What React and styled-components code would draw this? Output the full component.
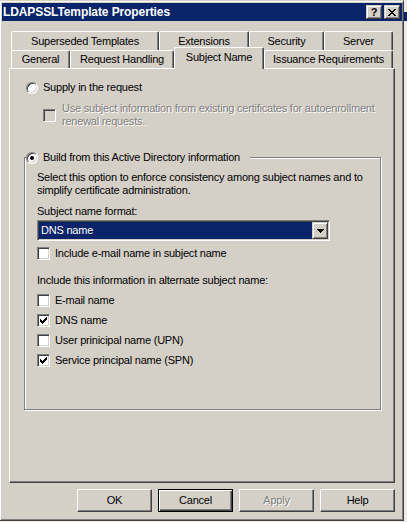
import React from 'react';
import styled, { createGlobalStyle, css } from 'styled-components';

const Global = createGlobalStyle`
  html, body { margin: 0; padding: 0; }
  body {
    background: linear-gradient(#0a246a, #0a246a) no-repeat 404px 12px / 3px 9px, #ecebe6;
    font-family: "Liberation Sans", Arial, sans-serif;
    font-size: 11px;
  }
`;

const Window = styled.div`
  box-sizing: border-box;
  width: 405px;
  height: 521px;
  margin-left: -1px;
  background: #d4d0c8;
  border: 1px solid;
  border-color: #d4d0c8 #404040 #404040 #d4d0c8;
  box-shadow: inset 1px 1px #fff, inset -1px -1px #808080;
  padding: 2px 1px 0 2px;
  display: flex;
  flex-direction: column;
  font-family: "Liberation Sans", Arial, sans-serif;
  font-size: 11px;
  line-height: 13px;
  letter-spacing: -0.22px;
  color: #000;
`;

const TitleBar = styled.div`
  height: 18px;
  background: #0a246a;
  display: flex;
  align-items: center;
  padding-left: 1px;
`;

const TitleText = styled.div`
  color: #fff;
  font-weight: bold;
  font-size: 12px;
  letter-spacing: -0.1px;
  white-space: nowrap;
`;

const CaptionButtons = styled.div`
  margin-left: auto;
  margin-right: 2px;
  display: flex;
  gap: 2px;
`;

const CaptionButton = styled.div`
  box-sizing: border-box;
  width: 16px;
  height: 14px;
  background: #d4d0c8;
  border: 1px solid;
  border-color: #d4d0c8 #404040 #404040 #d4d0c8;
  box-shadow: inset 1px 1px #fff, inset -1px -1px #808080;
  display: flex;
  align-items: center;
  justify-content: center;
  font-weight: bold;
  font-size: 11px;
  letter-spacing: 0;
  color: #000;
`;

const Body = styled.div`
  padding: 10px 7px 0 7px;
  display: flex;
  flex-direction: column;
`;

const TabStrip = styled.div`
  margin-left: 2px;
  width: 382px;
  display: flex;
  flex-direction: column;
`;

const TabRow = styled.div`
  display: flex;
  align-items: flex-start;
  height: ${(p) => p.$h}px;
`;

const Tab = styled.div`
  box-sizing: border-box;
  flex: none;
  width: ${(p) => p.$w}px;
  height: ${(p) => p.$h}px;
  background: #d4d0c8;
  border-top: 1px solid #fff;
  border-left: 1px solid #fff;
  border-right: 1px solid #404040;
  border-radius: 2px 2px 0 0;
  box-shadow: inset -1px 0 #808080;
  display: flex;
  justify-content: center;
  padding-top: ${(p) => p.$pt}px;
  white-space: nowrap;
  ${(p) =>
    p.$selected &&
    css`
      position: relative;
      z-index: 2;
      margin-top: -3px;
      height: 22px;
    `}
`;

const Panel = styled.div`
  box-sizing: border-box;
  height: 415px;
  border: 1px solid;
  border-color: #fff #404040 #404040 #fff;
  box-shadow: inset -1px -1px #808080;
  padding: 12px 0 0 16px;
  display: flex;
  flex-direction: column;
`;

const OptionRow = styled.div`
  display: flex;
  align-items: center;
  gap: ${(p) => p.$gap ?? 5}px;
  margin-top: ${(p) => p.$mt ?? 0}px;
  margin-left: ${(p) => p.$ml ?? 0}px;
  white-space: nowrap;
`;

const Radio = styled.div`
  box-sizing: border-box;
  flex: none;
  width: 12px;
  height: 12px;
  border-radius: 50%;
  background: #fff;
  border: 1px solid;
  border-color: #808080 #fff #fff #808080;
  box-shadow: inset 1px 1px #404040, inset -1px -1px #d4d0c8;
  display: flex;
  align-items: center;
  justify-content: center;
  &::after {
    content: '';
    display: ${(p) => (p.$checked ? 'block' : 'none')};
    width: 4px;
    height: 4px;
    border-radius: 50%;
    background: #000;
  }
`;

const Box = styled.div`
  box-sizing: border-box;
  flex: none;
  width: 13px;
  height: 13px;
  background: ${(p) => (p.$disabled ? '#d4d0c8' : '#fff')};
  border: 1px solid;
  border-color: #808080 #fff #fff #808080;
  box-shadow: inset 1px 1px #404040, inset -1px -1px #d4d0c8;
  display: flex;
  align-items: center;
  justify-content: center;
`;

const Label = styled.span`
  color: ${(p) => (p.$disabled ? '#808080' : '#000')};
  ${(p) => p.$disabled && css`text-shadow: 1px 1px #fff;`}
`;

const Group = styled.div`
  position: relative;
  box-sizing: border-box;
  width: 357px;
  height: 253px;
  margin: 29px 0 0 -2px;
  border: 1px solid #808080;
  box-shadow: inset 1px 1px #fff, 1px 1px #fff;
  padding: 13px 0 0 12px;
  display: flex;
  flex-direction: column;
  align-items: flex-start;
`;

const GroupLegend = styled.div`
  position: absolute;
  top: -7px;
  left: 1px;
  background: #d4d0c8;
  padding-right: 10px;
  display: flex;
  align-items: center;
  gap: 5px;
  white-space: nowrap;
`;

const Text = styled.div`
  margin-top: ${(p) => p.$mt ?? 0}px;
  white-space: nowrap;
`;

const Combo = styled.div`
  box-sizing: border-box;
  margin-top: 2px;
  width: 293px;
  height: 21px;
  background: #fff;
  border: 1px solid;
  border-color: #808080 #fff #fff #808080;
  box-shadow: inset 1px 1px #404040, inset -1px -1px #d4d0c8;
  padding: 1px;
  display: flex;
`;

const ComboValue = styled.div`
  flex: 1;
  background: #0a246a;
  color: #fff;
  padding-left: 2px;
  display: flex;
  align-items: center;
`;

const DropButton = styled.div`
  box-sizing: border-box;
  width: 16px;
  height: 17px;
  background: #d4d0c8;
  border: 1px solid;
  border-color: #d4d0c8 #404040 #404040 #d4d0c8;
  box-shadow: inset 1px 1px #fff, inset -1px -1px #808080;
  display: flex;
  align-items: center;
  justify-content: center;
`;

const ButtonRow = styled.div`
  margin-top: 6px;
  display: flex;
  justify-content: flex-end;
  gap: 6px;
`;

const Button = styled.div`
  box-sizing: border-box;
  width: 75px;
  height: 23px;
  background: #d4d0c8;
  border: 1px solid;
  border-color: #fff #404040 #404040 #fff;
  box-shadow: inset -1px -1px #808080;
  display: flex;
  align-items: center;
  justify-content: center;
  color: ${(p) => (p.$disabled ? '#808080' : '#000')};
  ${(p) => p.$disabled && css`text-shadow: 1px 1px #fff;`}
  ${(p) =>
    p.$default &&
    css`
      border-color: #000;
      box-shadow: inset 1px 1px #fff, inset -1px -1px #404040, inset -2px -2px #808080;
    `}
`;

const Check = () => (
  <svg width="7" height="7" viewBox="0 0 7 7" shapeRendering="crispEdges">
    <path
      fill="#000"
      d="M6 0h1v1h-1zM5 1h2v1h-2zM0 2h1v1h-1zM4 2h3v1h-3zM0 3h2v1h-2zM3 3h3v1h-3zM0 4h5v1h-5zM1 5h3v1h-3zM2 6h1v1h-1z"
    />
  </svg>
);

const Arrow = () => (
  <svg width="7" height="4" viewBox="0 0 7 4" shapeRendering="crispEdges">
    <path fill="#000" d="M0 0h7v1h-7zM1 1h5v1h-5zM2 2h3v1h-3zM3 3h1v1h-1z" />
  </svg>
);

const CloseGlyph = () => (
  <svg width="8" height="7" viewBox="0 0 8 7" shapeRendering="crispEdges">
    <path
      fill="#000"
      d="M0 0h2v1h-2zM6 0h2v1h-2zM1 1h2v1h-2zM5 1h2v1h-2zM2 2h4v1h-4zM3 3h2v1h-2zM2 4h4v1h-4zM1 5h2v1h-2zM5 5h2v1h-2zM0 6h2v1h-2zM6 6h2v1h-2z"
    />
  </svg>
);

const CheckBox = ({ checked, disabled }) => (
  <Box $disabled={disabled}>{checked && <Check />}</Box>
);

const row1 = [
  ['Superseded Templates', 148],
  ['Extensions', 90],
  ['Security', 75],
  ['Server', 69],
];
const row2 = [
  ['General', 59],
  ['Request Handling', 104],
  ['Subject Name', 90, true],
  ['Issuance Requirements', 129],
];

const altNames = [
  ['E-mail name', false],
  ['DNS name', true],
  ['User prinicipal name (UPN)', false],
  ['Service principal name (SPN)', true],
];

export default function App() {
  return (
    <>
      <Global />
      <Window>
        <TitleBar>
          <TitleText>LDAPSSLTemplate Properties</TitleText>
          <CaptionButtons>
            <CaptionButton>?</CaptionButton>
            <CaptionButton>
              <CloseGlyph />
            </CaptionButton>
          </CaptionButtons>
        </TitleBar>
        <Body>
          <TabStrip>
            <TabRow $h={19}>
              {row1.map(([t, w]) => (
                <Tab key={t} $w={w} $h={19} $pt={3}>
                  {t}
                </Tab>
              ))}
            </TabRow>
            <TabRow $h={18}>
              {row2.map(([t, w, sel]) => (
                <Tab key={t} $w={w} $h={18} $pt={sel ? 3 : 2} $selected={sel}>
                  {t}
                </Tab>
              ))}
            </TabRow>
          </TabStrip>
          <Panel>
            <OptionRow>
              <Radio />
              <Label>Supply in the request</Label>
            </OptionRow>
            <OptionRow $mt={8} $ml={17} $gap={6}>
              <CheckBox disabled />
              <Label $disabled>
                Use subject information from existing certificates for autoenrollment
                <br />
                renewal requests.
              </Label>
            </OptionRow>
            <Group>
              <GroupLegend>
                <Radio $checked />
                <Label>Build from this Active Directory information</Label>
              </GroupLegend>
              <Text>
                Select this option to enforce consistency among subject names and to
                <br />
                simplify certificate administration.
              </Text>
              <Text $mt={8}>Subject name format:</Text>
              <Combo>
                <ComboValue>DNS name</ComboValue>
                <DropButton>
                  <Arrow />
                </DropButton>
              </Combo>
              <OptionRow $mt={6}>
                <CheckBox />
                <Label>Include e-mail name in subject name</Label>
              </OptionRow>
              <Text $mt={14}>Include this information in alternate subject name:</Text>
              {altNames.map(([t, c]) => (
                <OptionRow key={t} $mt={7}>
                  <CheckBox checked={c} />
                  <Label>{t}</Label>
                </OptionRow>
              ))}
            </Group>
          </Panel>
          <ButtonRow>
            <Button>OK</Button>
            <Button $default>Cancel</Button>
            <Button $disabled>Apply</Button>
            <Button>Help</Button>
          </ButtonRow>
        </Body>
      </Window>
    </>
  );
}
